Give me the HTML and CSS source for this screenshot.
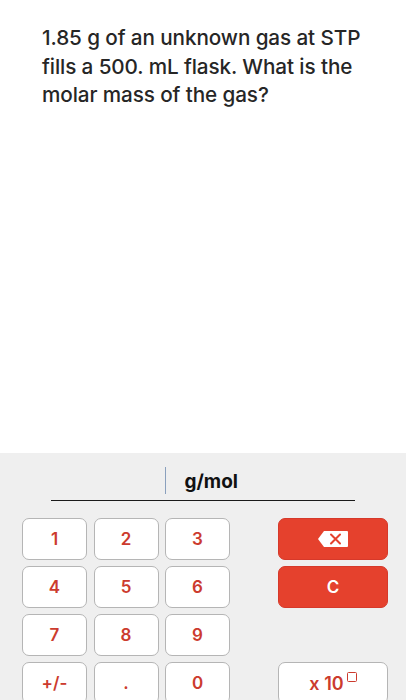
FILE: index.html
```html
<!DOCTYPE html>
<html lang="en">
<head>
  <meta charset="UTF-8">
  <title>Molar Mass Question</title>
  <meta name="viewport" content="width=device-width, initial-scale=1.0">
  <link rel="stylesheet" href="styles.css">
</head>
<body>

  <main class="question">
    <p>1.85 g of an unknown gas at STP fills a 500. mL flask. What is the molar mass of the gas?</p>
  </main>

  <section class="panel">
    <div class="display">
      <span class="cursor"></span>
      <span class="unit">g/mol</span>
    </div>

    <div class="keypad">
      <button class="key">1</button>
      <button class="key">2</button>
      <button class="key">3</button>
      <button class="key red wide">
        <svg width="32" height="18" viewBox="0 0 32 18">
          <path d="M7 1 H30 a1 1 0 0 1 1 1 V16 a1 1 0 0 1 -1 1 H7 L1 9 Z" fill="#fff"/>
          <path d="M14 4.5 L23 13.5 M23 4.5 L14 13.5" stroke="#e5412d" stroke-width="2" stroke-linecap="round"/>
        </svg>
      </button>

      <button class="key">4</button>
      <button class="key">5</button>
      <button class="key">6</button>
      <button class="key red wide">C</button>

      <button class="key">7</button>
      <button class="key">8</button>
      <button class="key">9</button>
      <span class="spacer"></span>

      <button class="key">+/-</button>
      <button class="key">.</button>
      <button class="key">0</button>
      <button class="key wide exp">x 10<span class="box"></span></button>
    </div>
  </section>

</body>
</html>
```

FILE: styles.css
```css
body {
  margin: 0;
  font-family: Inter, 'Liberation Sans', sans-serif;
  background: #fff;
}

.question {
  height: 453px;
  box-sizing: border-box;
  padding: 24px 30px 0 42px;
}

.question p {
  margin: 0;
  font-size: 20.7px;
  font-weight: 500;
  line-height: 28.5px;
  color: #262626;
  letter-spacing: -0.1px;
}

.panel {
  background: #efefef;
  height: 247px;
  padding-top: 14px;
  box-sizing: border-box;
}

.display {
  width: 304px;
  height: 34px;
  margin: 0 auto;
  border-bottom: 1.5px solid #1a1a1a;
  box-sizing: border-box;
  display: flex;
  align-items: flex-start;
  justify-content: center;
  gap: 18px;
}

.cursor {
  width: 1.5px;
  height: 27px;
  background: #8aa0bd;
  margin-left: -3px;
}

.unit {
  font-size: 19px;
  font-weight: 700;
  color: #111;
  line-height: 27px;
  margin-top: 1px;
}

.keypad {
  display: grid;
  grid-template-columns: repeat(3, 65px) 1fr 110px;
  grid-auto-rows: 42px;
  column-gap: 6.5px;
  row-gap: 6px;
  padding: 0 18px 0 22px;
  margin-top: 17px;
}

.wide {
  grid-column: 5;
}

.key {
  font-family: inherit;
  font-size: 17px;
  font-weight: 600;
  color: #cc3b2e;
  background: #fff;
  border: 1.5px solid #b5b5b5;
  border-radius: 7px;
  padding: 0;
  display: flex;
  align-items: center;
  justify-content: center;
}

.key.red {
  background: #e5412d;
  border-color: #d6392a;
  color: #fff;
}

.key.exp {
  font-size: 18px;
}

.spacer {
  grid-column: 5;
}

.box {
  display: inline-block;
  width: 8px;
  height: 8px;
  border: 1.3px solid #cc3b2e;
  border-radius: 1.5px;
  margin-left: 3px;
  position: relative;
  top: -6px;
}
```
